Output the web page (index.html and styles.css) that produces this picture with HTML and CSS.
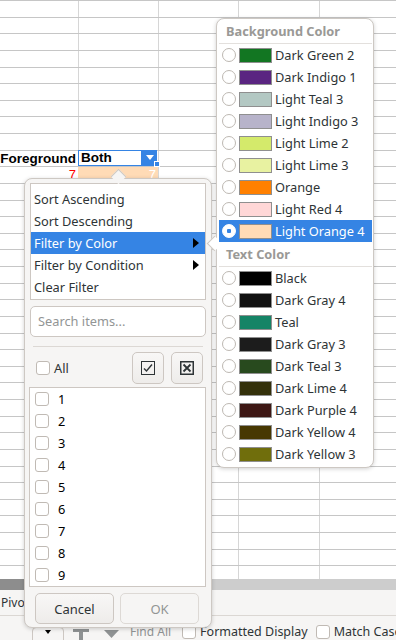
FILE: index.html
```html
<!DOCTYPE html>
<html>
<head>
<meta charset="utf-8">
<link rel="stylesheet" href="styles.css">
</head>
<body>
<div class="app">
  <div class="sheet">
    <div class="row"></div><div class="row"></div><div class="row"></div>
    <div class="row"></div><div class="row"></div><div class="row"></div>
    <div class="row"></div><div class="row"></div><div class="row"></div>
    <div class="row data">
      <div class="cell label">Foreground</div>
      <div class="cell edit">
        <div class="edit-input">Both</div>
        <div class="edit-btn"><span class="wtri"></span></div>
        <span class="handle"></span>
      </div>
    </div>
    <div class="row data">
      <div class="cell num red">7</div>
      <div class="cell num orange">7</div>
    </div>
    <div class="row"></div><div class="row"></div><div class="row"></div>
    <div class="row"></div><div class="row"></div><div class="row"></div>
    <div class="row"></div><div class="row"></div><div class="row"></div>
    <div class="row"></div><div class="row"></div><div class="row"></div>
    <div class="row"></div><div class="row"></div><div class="row"></div>
    <div class="row"></div><div class="row"></div><div class="row"></div>
    <div class="row"></div><div class="row"></div><div class="row"></div>
    <div class="row"></div><div class="row"></div><div class="row"></div>
  </div>
  <div class="hscroll"><div class="thumb"></div></div>
  <div class="bottom">
    <div class="line1">Pivot</div>
    <div class="line2">
      <div class="dd"><span class="btri"></span></div>
      <svg class="gicon up" width="16" height="14" viewBox="0 0 16 14"><rect x="0" y="3" width="16" height="3" fill="#8f9293"/><rect x="6" y="3" width="4" height="11" fill="#8f9293"/></svg>
      <svg class="gicon down" width="15" height="12" viewBox="0 0 15 12"><polygon points="0,4 15,4 7.5,12" fill="#8f9293"/></svg>
      <span class="findall">Find All</span>
      <span class="cb small"></span><span class="opt-label">Formatted Display</span>
      <span class="cb small gap"></span><span class="opt-label">Match Case</span>
    </div>
  </div>
</div>

<div class="filter-pop">
  <div class="notch"></div>
  <ul class="menu">
    <li>Sort Ascending</li>
    <li>Sort Descending</li>
    <li class="sel">Filter by Color<span class="tri"></span></li>
    <li>Filter by Condition<span class="tri"></span></li>
    <li>Clear Filter</li>
  </ul>
  <div class="search">Search items...</div>
  <div class="sep"></div>
  <div class="tools">
    <span class="all"><span class="cb"></span>All</span>
    <button class="ib">
      <svg width="14" height="14" viewBox="0 0 14 14"><rect x="0.5" y="0.5" width="13" height="13" fill="none" stroke="#2e3436"/><polyline points="3,7.5 5.5,10 11,3.5" fill="none" stroke="#2e3436" stroke-width="1.4"/></svg>
    </button>
    <button class="ib">
      <svg width="14" height="14" viewBox="0 0 14 14"><rect x="0.75" y="0.75" width="12.5" height="12.5" fill="none" stroke="#2e3436" stroke-width="1.5"/><path d="M3.5 3.5 L10.5 10.5 M10.5 3.5 L3.5 10.5" stroke="#2e3436" stroke-width="1.8"/></svg>
    </button>
  </div>
  <div class="items">
    <div class="item"><span class="cb"></span>1</div>
    <div class="item"><span class="cb"></span>2</div>
    <div class="item"><span class="cb"></span>3</div>
    <div class="item"><span class="cb"></span>4</div>
    <div class="item"><span class="cb"></span>5</div>
    <div class="item"><span class="cb"></span>6</div>
    <div class="item"><span class="cb"></span>7</div>
    <div class="item"><span class="cb"></span>8</div>
    <div class="item"><span class="cb"></span>9</div>
  </div>
  <div class="actions">
    <button class="btn">Cancel</button>
    <button class="btn dis">OK</button>
  </div>
</div>

<div class="color-pop">
  <div class="pnotch"></div>
  <div class="hdr">Background Color</div>
  <div class="opt"><span class="radio"></span><span class="sw" style="background:#127622"></span>Dark Green 2</div>
  <div class="opt"><span class="radio"></span><span class="sw" style="background:#5a2581"></span>Dark Indigo 1</div>
  <div class="opt"><span class="radio"></span><span class="sw" style="background:#b3c8c3"></span>Light Teal 3</div>
  <div class="opt"><span class="radio"></span><span class="sw" style="background:#b7b3ca"></span>Light Indigo 3</div>
  <div class="opt"><span class="radio"></span><span class="sw" style="background:#d4ea6b"></span>Light Lime 2</div>
  <div class="opt"><span class="radio"></span><span class="sw" style="background:#e8f2a1"></span>Light Lime 3</div>
  <div class="opt"><span class="radio"></span><span class="sw" style="background:#ff8000"></span>Orange</div>
  <div class="opt"><span class="radio"></span><span class="sw" style="background:#ffd7d7"></span>Light Red 4</div>
  <div class="opt sel"><span class="radio on"></span><span class="sw" style="background:#ffdbb6"></span>Light Orange 4</div>
  <div class="hdr">Text Color</div>
  <div class="opt"><span class="radio"></span><span class="sw" style="background:#000000"></span>Black</div>
  <div class="opt"><span class="radio"></span><span class="sw" style="background:#111111"></span>Dark Gray 4</div>
  <div class="opt"><span class="radio"></span><span class="sw" style="background:#158466"></span>Teal</div>
  <div class="opt"><span class="radio"></span><span class="sw" style="background:#1c1c1c"></span>Dark Gray 3</div>
  <div class="opt"><span class="radio"></span><span class="sw" style="background:#284a1e"></span>Dark Teal 3</div>
  <div class="opt"><span class="radio"></span><span class="sw" style="background:#33300a"></span>Dark Lime 4</div>
  <div class="opt"><span class="radio"></span><span class="sw" style="background:#3d1714"></span>Dark Purple 4</div>
  <div class="opt"><span class="radio"></span><span class="sw" style="background:#473802"></span>Dark Yellow 4</div>
  <div class="opt"><span class="radio"></span><span class="sw" style="background:#706e0c"></span>Dark Yellow 3</div>
</div>
</body>
</html>
```

FILE: styles.css
```css
html, body {
  margin: 0;
  padding: 0;
}
body {
  width: 396px;
  height: 640px;
  overflow: hidden;
  position: relative;
  background: #ffffff;
  font-family: "Noto Sans", "DejaVu Sans", sans-serif;
  color: #2e3436;
}

/* ---------- spreadsheet ---------- */
.app {
  display: flex;
  flex-direction: column;
  height: 640px;
}
.sheet {
  flex: none;
  height: 579px;
  overflow: hidden;
  font-family: "Liberation Sans", Arial, sans-serif;
  font-size: 13.5px;
  background-image: linear-gradient(90deg,
    transparent 78px, #d6d6d6 78px, #d6d6d6 79px,
    transparent 79px, transparent 158px, #d6d6d6 158px, #d6d6d6 159px,
    transparent 159px, transparent 238px, #d6d6d6 238px, #d6d6d6 239px,
    transparent 239px, transparent 319px, #d6d6d6 319px, #d6d6d6 320px,
    transparent 320px);
}
.row {
  height: 16.64px;
  box-sizing: border-box;
  border-top: 1px solid #c6c6c6;
}
.row.data {
  display: grid;
  grid-template-columns: 78px 80px 80px 80px 80px;
}
.cell {
  line-height: 15.6px;
  white-space: nowrap;
}
.cell.label {
  font-weight: bold;
  color: #000;
  text-align: right;
  padding-right: 2px;
  background: #fff;
}
.cell.edit {
  position: relative;
  display: flex;
  margin-top: -1px;
  height: 16px;
}
.edit-input {
  width: 64px;
  height: 16px;
  box-sizing: border-box;
  border: 1px solid #3584e4;
  background: #fff;
  font-weight: bold;
  color: #000;
  padding-left: 2px;
  line-height: 14px;
}
.edit-btn {
  width: 15px;
  height: 16px;
  background: #3584e4;
  display: flex;
  align-items: center;
  justify-content: center;
}
.wtri {
  width: 0;
  height: 0;
  border-left: 4px solid transparent;
  border-right: 4px solid transparent;
  border-top: 5px solid #fff;
}
.handle {
  position: absolute;
  left: 76px;
  top: 11px;
  width: 4px;
  height: 4px;
  background: #3584e4;
  border: 1px solid #fff;
}
.cell.num {
  text-align: right;
  padding-right: 2px;
  font-size: 13px;
}
.cell.red { color: #ff0000; }
.cell.orange { background: #ffdbb6; color: #ffffff; }

.hscroll {
  flex: none;
  height: 11px;
  background: #cdcdcd;
  display: flex;
}
.thumb {
  width: 60px;
  background: #8d8d8d;
}

.bottom {
  flex: 1;
  background: #f6f5f4;
  font-size: 12px;
  color: #2e3436;
  overflow: hidden;
}
.line1 {
  height: 25px;
  line-height: 25px;
  border-bottom: 1px solid #dbd7d3;
  padding-left: 1px;
}
.line2 {
  display: flex;
  align-items: flex-start;
  padding-top: 9px;
  white-space: nowrap;
}
.line2 > * {
  flex: none;
}
.dd {
  margin-left: 32px;
  margin-top: 2px;
  width: 32px;
  height: 24px;
  box-sizing: border-box;
  border: 1px solid #cdc7c2;
  border-radius: 4px;
  background: #f6f5f4;
  display: flex;
  justify-content: center;
  padding-top: 2px;
}
.btri {
  width: 0;
  height: 0;
  border-left: 3px solid transparent;
  border-right: 3px solid transparent;
  border-top: 4px solid #000;
}
.gicon.up { margin-left: 9px; margin-top: 1px; }
.gicon.down { margin-left: 15px; margin-top: 1px; }
.findall {
  margin-left: 11px;
  color: #8f9293;
  line-height: 14px;
  margin-top: 0;
}
.cb {
  display: inline-block;
  width: 14px;
  height: 14px;
  box-sizing: border-box;
  border: 1px solid #c0bab4;
  border-radius: 3px;
  background: #fff;
  flex: none;
}
.cb.small {
  margin-left: 11px;
}
.cb.small.gap { margin-left: 8px; }
.opt-label {
  margin-left: 4px;
  font-size: 12.5px;
  line-height: 14px;
  margin-top: 0;
}

/* ---------- filter popup ---------- */
.filter-pop {
  position: absolute;
  left: 24px;
  top: 178px;
  width: 188px;
  box-sizing: border-box;
  border: 1px solid #cdc8c3;
  border-radius: 8px;
  background: #f6f5f4;
  box-shadow: 0 1px 4px rgba(0, 0, 0, 0.18);
  padding: 4px 5px 3px 5px;
  font-size: 12.8px;
  z-index: 2;
}
.notch {
  position: absolute;
  left: 88px;
  top: -8px;
  width: 10px;
  height: 10px;
  background: #f6f5f4;
  border-left: 1px solid #cdc8c3;
  border-top: 1px solid #cdc8c3;
  transform: rotate(45deg);
}
.menu {
  list-style: none;
  margin: 0;
  padding: 4px 0 1px 0;
  border: 1px solid #cdc7c2;
  background: #fff;
}
.menu li {
  position: relative;
  height: 22px;
  line-height: 22px;
  padding-left: 3px;
  color: #2e3436;
  white-space: nowrap;
}
.menu li.sel {
  background: #3584e4;
  color: #fff;
}
.tri {
  position: absolute;
  right: 6px;
  top: 6px;
  width: 0;
  height: 0;
  border-top: 5px solid transparent;
  border-bottom: 5px solid transparent;
  border-left: 6px solid #000;
}
.search {
  margin-top: 6px;
  height: 31px;
  box-sizing: border-box;
  border: 1px solid #cdc7c2;
  border-radius: 5px;
  background: #fff;
  padding-left: 7px;
  line-height: 29px;
  color: #929595;
}
.sep {
  margin: 9px 3px 0 3px;
  height: 1px;
  background: #dcd8d4;
}
.tools {
  margin-top: 5px;
  height: 32px;
  display: flex;
  align-items: center;
}
.all {
  display: flex;
  align-items: center;
  margin-left: 6px;
  gap: 4px;
  color: #2e3436;
}
.ib {
  width: 32px;
  height: 32px;
  box-sizing: border-box;
  border: 1px solid #cdc7c2;
  border-radius: 5px;
  background: linear-gradient(#f8f7f6, #eeecea);
  display: flex;
  align-items: center;
  justify-content: center;
  padding: 0;
  margin: 0;
}
.ib:first-of-type { margin-left: auto; }
.ib + .ib { margin-left: 7px; margin-right: 3px; }
.items {
  margin-top: 3px;
  margin-left: -1px;
  height: 200px;
  box-sizing: border-box;
  border: 1px solid #cdc7c2;
  background: #fff;
}
.item {
  height: 22px;
  display: flex;
  align-items: center;
  padding-left: 5px;
  gap: 9px;
  color: #000;
}
.actions {
  margin-top: 6px;
  display: flex;
  gap: 6px;
  padding: 0 7px 0 5px;
}
.btn {
  flex: 1;
  height: 31px;
  box-sizing: border-box;
  border: 1px solid #cdc7c2;
  border-radius: 5px;
  background: linear-gradient(#f8f7f6, #eeecea);
  font-family: "Noto Sans", "DejaVu Sans", sans-serif;
  font-size: 13px;
  color: #2e3436;
  padding: 0;
}
.btn.dis {
  background: #f6f5f4;
  border-color: #ddd9d5;
  color: #929595;
}

/* ---------- color popover ---------- */
.color-pop {
  position: absolute;
  left: 216px;
  top: 18px;
  width: 158px;
  box-sizing: border-box;
  border: 1px solid #cdc8c3;
  border-radius: 8px;
  background: #fff;
  box-shadow: 0 1px 4px rgba(0, 0, 0, 0.18);
  padding: 0 1px 2px 2px;
  font-size: 12.8px;
  z-index: 3;
}
.pnotch {
  position: absolute;
  left: -8px;
  top: 219px;
  width: 10px;
  height: 10px;
  background: #fff;
  border-left: 1px solid #cdc8c3;
  border-bottom: 1px solid #cdc8c3;
  transform: rotate(45deg);
}
.hdr {
  position: relative;
  height: 24px;
  line-height: 24px;
  padding-left: 7px;
  font-weight: bold;
  color: #9a9996;
  border-bottom: 1px solid #e3e0dd;
}
.opt {
  position: relative;
  height: 22px;
  display: flex;
  align-items: center;
  padding-left: 3px;
  color: #2e3436;
  white-space: nowrap;
}
.opt.sel {
  background: #3584e4;
  color: #fff;
}
.radio {
  width: 14px;
  height: 14px;
  box-sizing: border-box;
  border: 1px solid #bdb8b2;
  border-radius: 50%;
  background: #fff;
  margin-right: 3px;
  flex: none;
}
.radio.on {
  border: 1px solid #fff;
  background: radial-gradient(circle, #3584e4 0, #3584e4 2px, #fff 2.5px);
}
.sw {
  width: 33px;
  height: 15px;
  box-sizing: border-box;
  border: 1px solid #8f8f8f;
  margin-right: 3px;
  flex: none;
}
```
